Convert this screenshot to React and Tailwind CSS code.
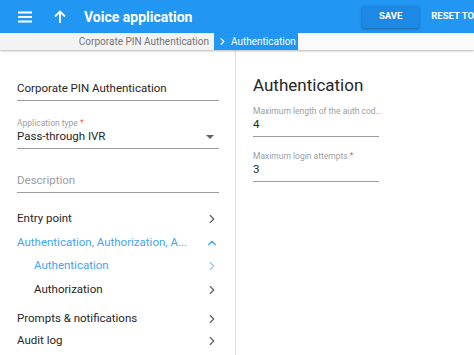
import { ChevronRight, ChevronUp } from 'lucide-react';

function Field({ label, value, required, muted, select, className = '' }) {
  return (
    <div className={'border-b border-[#9e9e9e] ' + className}>
      {label && (
        <div className="text-[8.5px] leading-[11px] text-[#9e9e9e] whitespace-nowrap -mb-[3px]">
          {label}
          {required && <span className="text-[#f06262]"> *</span>}
        </div>
      )}
      <div className="flex items-center justify-between h-[22px]">
        <span className={'text-[11.5px] ' + (muted ? 'text-[#9e9e9e]' : 'text-[#262626]')}>{value}</span>
        {select && (
          <svg width="8" height="4" viewBox="0 0 8 4" className="mr-[5px]">
            <path d="M0 0 L8 0 L4 4 Z" fill="#616161" />
          </svg>
        )}
      </div>
    </div>
  );
}

function NavRow({ label, active, indent, open, h = 'h-[23px]' }) {
  return (
    <div className={'flex items-center justify-between ' + h + (indent ? ' pl-[17px]' : '')}>
      <span className={'text-[11.5px] whitespace-nowrap ' + (active ? 'text-[#42a5f5]' : 'text-[#262626]')}>{label}</span>
      {open ? (
        <ChevronUp size={14} strokeWidth={2} className="text-[#42a5f5]" />
      ) : (
        <ChevronRight size={14} strokeWidth={2} className={active ? 'text-[#90caf9]' : 'text-[#616161]'} />
      )}
    </div>
  );
}

export default function App() {
  return (
    <div className="w-[474px] h-[355px] overflow-hidden bg-white flex flex-col" style={{ fontFamily: 'Roboto, "Liberation Sans", sans-serif' }}>
      {/* top bar */}
      <div className="h-[33px] bg-[#2196f3] flex items-center text-white shrink-0">
        <svg width="16" height="12" viewBox="0 0 16 12" className="ml-[17px]">
          <path d="M1 1.5h14M1 6h14M1 10.5h14" stroke="white" strokeWidth="1.8" />
        </svg>
        <svg width="14" height="14" viewBox="0 0 14 14" className="ml-[20px]">
          <path d="M7 13V2M2 6.5L7 1.5l5 5" stroke="white" strokeWidth="1.8" fill="none" />
        </svg>
        <div className="ml-[17px] text-[14px] font-bold pt-[1px]">Voice application</div>
        <div className="ml-auto flex items-center">
          <button className="w-[57px] h-[22px] bg-[#1e88e5] rounded-[2px] shadow-[0_1px_3px_rgba(0,0,0,0.35)] text-[9.5px] font-bold">SAVE</button>
          <span className="ml-[12px] text-[9.5px] font-bold whitespace-nowrap">RESET TO</span>
        </div>
      </div>

      {/* breadcrumbs */}
      <div className="h-[17px] bg-[#fafafa] flex items-stretch shrink-0 shadow-[0_1px_2px_rgba(0,0,0,0.3)] relative z-10">
        <div className="w-[214px] bg-[#f3f3f3] flex items-center justify-end pr-[5px] text-[10px] text-[#757575]">
          Corporate PIN Authentication
        </div>
        <div className="w-[84px] bg-[#2196f3] flex items-center text-white text-[10px]">
          <ChevronRight size={11} strokeWidth={2.5} className="ml-[3px] mr-[3px]" />
          Authentication
        </div>
      </div>

      <div className="flex flex-1 min-h-0">
        {/* left panel */}
        <div className="w-[236px] shrink-0 pl-[17px] pr-[16px] pt-[28px] border-r border-[#e0e0e0]">
          <Field value="Corporate PIN Authentication" />
          <Field className="mt-[17px]" label="Application type" required value="Pass-through IVR" select />
          <Field className="mt-[21px]" value="Description" muted />
          <div className="mt-[14px]">
            <NavRow label="Entry point" h="h-[24px]" />
            <NavRow label="Authentication, Authorization, A..." active open h="h-[24px]" />
            <NavRow label="Authentication" active indent h="h-[22px]" />
            <NavRow label="Authorization" indent h="h-[26px]" />
            <div className="h-[4px]" />
            <NavRow label="Prompts & notifications" />
            <NavRow label="Audit log" h="h-[22px]" />
          </div>
        </div>

        {/* right panel */}
        <div className="flex-1 pl-[17px] pt-[23px]">
          <div className="text-[17px] text-[#262626] leading-[24px]">Authentication</div>
          <div className="w-[126px]">
            <Field className="mt-[9px]" label="Maximum length of the auth cod..." value="4" />
            <Field className="mt-[14px]" label="Maximum login attempts" required value="3" />
          </div>
        </div>
      </div>
    </div>
  );
}
